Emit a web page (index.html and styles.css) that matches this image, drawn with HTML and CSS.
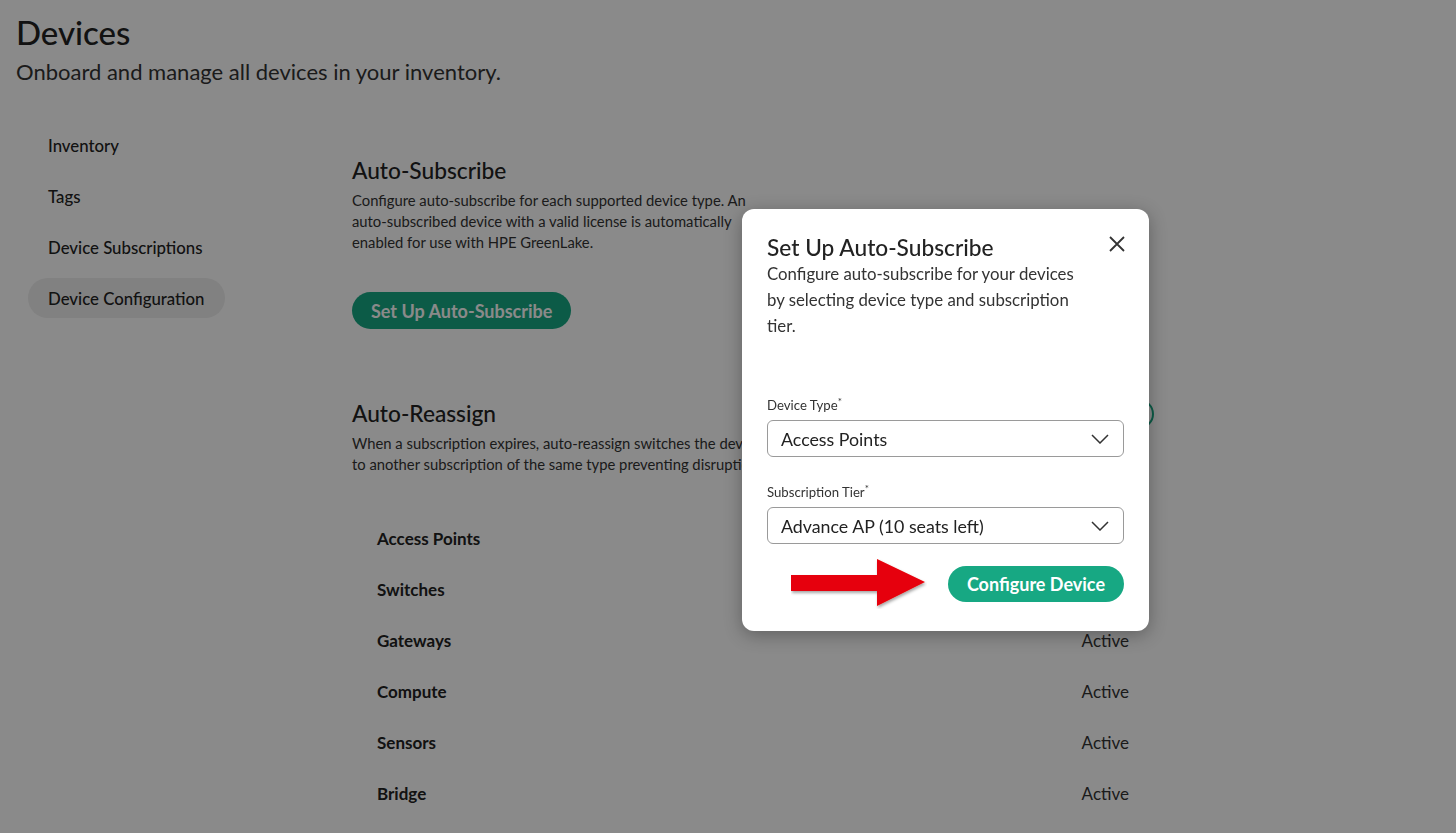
FILE: index.html
```html
<!DOCTYPE html>
<html lang="en">
<head>
  <meta charset="UTF-8" />
  <meta name="viewport" content="width=device-width, initial-scale=1.0"/>
  <title>Devices</title>
  <link rel="stylesheet" href="styles.css">
</head>
<body>
  <div class="page">
    <header class="page-header">
      <h1>Devices</h1>
      <p>Onboard and manage all devices in your inventory.</p>
    </header>

    <div class="page-body">
      <nav class="side-nav">
        <a href="#" class="nav-item">Inventory</a>
        <a href="#" class="nav-item">Tags</a>
        <a href="#" class="nav-item">Device Subscriptions</a>
        <a href="#" class="nav-item active">Device Configuration</a>
      </nav>

      <main class="content">
        <section class="section">
          <h2>Auto-Subscribe</h2>
          <p class="section-desc">Configure auto-subscribe for each supported device type. An auto-subscribed device with a valid license is automatically enabled for use with HPE GreenLake.</p>
          <button class="btn-primary setup-btn">Set Up Auto-Subscribe</button>
        </section>

        <section class="section reassign">
          <div class="section-head">
            <h2>Auto-Reassign</h2>
            <button class="btn-outline">Edit</button>
          </div>
          <p class="section-desc wide">When a subscription expires, auto-reassign switches the device<br>to another subscription of the same type preventing disruption.</p>

          <div class="device-list">
            <div class="device-row"><span class="device-name">Access Points</span><span class="device-status">Active</span></div>
            <div class="device-row"><span class="device-name">Switches</span><span class="device-status">Active</span></div>
            <div class="device-row"><span class="device-name">Gateways</span><span class="device-status">Active</span></div>
            <div class="device-row"><span class="device-name">Compute</span><span class="device-status">Active</span></div>
            <div class="device-row"><span class="device-name">Sensors</span><span class="device-status">Active</span></div>
            <div class="device-row"><span class="device-name">Bridge</span><span class="device-status">Active</span></div>
          </div>
        </section>
      </main>
    </div>
  </div>

  <div class="overlay"></div>

  <div class="modal">
    <div class="modal-head">
      <div>
        <h3>Set Up Auto-Subscribe</h3>
        <p>Configure auto-subscribe for your devices by selecting device type and subscription tier.</p>
      </div>
      <button class="close-btn" aria-label="Close">
        <svg width="18" height="18" viewBox="0 0 18 18"><path d="M2 2 L16 16 M16 2 L2 16" stroke="#333" stroke-width="1.8" fill="none"/></svg>
      </button>
    </div>

    <div class="form-group first">
      <label>Device Type<sup>*</sup></label>
      <div class="select">
        <span>Access Points</span>
        <svg width="18" height="10" viewBox="0 0 18 10"><path d="M1 1 L9 9 L17 1" stroke="#333" stroke-width="1.5" fill="none"/></svg>
      </div>
    </div>

    <div class="form-group">
      <label>Subscription Tier<sup>*</sup></label>
      <div class="select">
        <span>Advance AP (10 seats left)</span>
        <svg width="18" height="10" viewBox="0 0 18 10"><path d="M1 1 L9 9 L17 1" stroke="#333" stroke-width="1.5" fill="none"/></svg>
      </div>
    </div>

    <div class="modal-foot">
      <svg class="arrow" width="136" height="50" viewBox="0 0 136 50">
        <defs>
          <filter id="shadow" x="-10%" y="-20%" width="130%" height="150%">
            <feDropShadow dx="1" dy="2" stdDeviation="1.5" flood-color="#000" flood-opacity="0.35"/>
          </filter>
        </defs>
        <polygon points="0,16 86,16 86,0 134,23 86,47 86,32 0,32" fill="#e60508" filter="url(#shadow)"/>
      </svg>
      <button class="btn-primary configure-btn">Configure Device</button>
    </div>
  </div>
</body>
</html>
```

FILE: styles.css
```css
* {
  margin: 0;
  padding: 0;
  box-sizing: border-box;
  font-family: Lato, 'Noto Sans', sans-serif;
}

body {
  background-color: white;
  color: #333;
  min-height: 100vh;
}

.page {
  padding: 12px 16px 0 16px;
}

.page-header h1 {
  font-size: 33px;
  line-height: 40px;
  font-weight: 500;
  color: #222;
}

.page-header p {
  font-size: 22px;
  line-height: 28px;
  margin-top: 6px;
  color: #333;
}

.page-body {
  display: flex;
  margin-top: 39px;
}

.side-nav {
  width: 336px;
  flex-shrink: 0;
  padding-left: 12px;
  display: flex;
  flex-direction: column;
  align-items: flex-start;
  gap: 11px;
}

.nav-item {
  display: inline-flex;
  align-items: center;
  height: 40px;
  padding: 0 20px;
  border-radius: 20px;
  font-size: 16.8px;
  font-weight: 500;
  color: #222;
  text-decoration: none;
}

.nav-item.active {
  background-color: #eeeeee;
}

.content {
  width: 802px;
  padding-top: 31px;
}

.section h2 {
  font-size: 22.7px;
  line-height: 30px;
  font-weight: 500;
  color: #222;
}

.section-desc {
  font-size: 14.8px;
  line-height: 21px;
  max-width: 405px;
  margin-top: 4px;
  color: #333;
}

.section-desc.wide {
  max-width: none;
  white-space: nowrap;
}

.btn-primary {
  border: none;
  background-color: #17a883;
  color: white;
  font-size: 18px;
  font-weight: 700;
  border-radius: 19px;
  cursor: pointer;
}

.setup-btn {
  margin-top: 39px;
  height: 37px;
  padding: 0 19px;
}

.reassign {
  margin-top: 70px;
}

.section-head {
  display: flex;
  justify-content: space-between;
  align-items: center;
}

.btn-outline {
  height: 30px;
  padding: 0 18px;
  border: 2px solid #17a883;
  background: white;
  border-radius: 15px;
  font-size: 15px;
  font-weight: 700;
  color: #222;
}

.device-list {
  margin-top: 38px;
}

.device-row {
  display: flex;
  justify-content: space-between;
  align-items: center;
  height: 51px;
  padding: 0 25px;
  font-size: 17px;
}

.device-name {
  font-weight: 700;
  color: #222;
}

.device-status {
  color: #333;
}

.overlay {
  position: fixed;
  inset: 0;
  background-color: rgba(0, 0, 0, 0.46);
}

.modal {
  position: absolute;
  left: 742px;
  top: 209px;
  width: 407px;
  background-color: white;
  border-radius: 12px;
  padding: 24px 25px 22px 25px;
  box-shadow: 0 4px 18px rgba(0, 0, 0, 0.3);
}

.modal-head {
  display: flex;
  justify-content: space-between;
  align-items: flex-start;
}

.modal-head h3 {
  font-size: 22.7px;
  line-height: 30px;
  font-weight: 500;
  color: #222;
}

.modal-head p {
  font-size: 16.8px;
  line-height: 26px;
  max-width: 320px;
  color: #333;
  margin-top: -2px;
}

.close-btn {
  border: none;
  background: none;
  margin-top: 2px;
  margin-right: -2px;
  cursor: pointer;
}

.form-group {
  margin-top: 26px;
}

.form-group.first {
  margin-top: 57px;
}

.form-group label {
  display: block;
  font-size: 13.2px;
  line-height: 18px;
  color: #333;
}

.form-group sup {
  font-size: 10px;
  line-height: 0;
}

.select {
  display: flex;
  justify-content: space-between;
  align-items: center;
  height: 37px;
  margin-top: 6px;
  padding: 0 14px 0 13px;
  border: 1px solid #9a9a9a;
  border-radius: 6px;
  font-size: 17.8px;
  color: #222;
}

.modal-foot {
  display: flex;
  justify-content: flex-end;
  align-items: center;
  gap: 21px;
  margin-top: 15px;
}

.configure-btn {
  height: 36px;
  padding: 0 19px;
}
```
